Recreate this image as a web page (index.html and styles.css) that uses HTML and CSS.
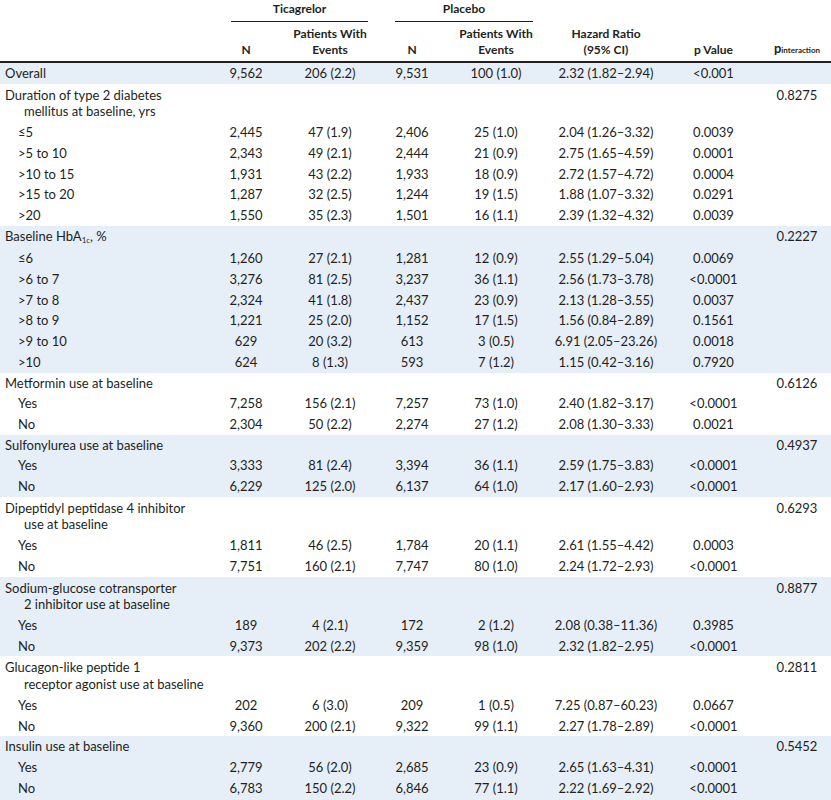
FILE: index.html
```html
<!DOCTYPE html>
<html lang="en">
<head>
<meta charset="utf-8">
<title>Subgroup analysis</title>
<link rel="stylesheet" href="styles.css">
</head>
<body>
<table class="tbl">
  <colgroup>
    <col class="c-label"><col class="c-n"><col class="c-ev"><col class="c-n2"><col class="c-ev2"><col class="c-hr"><col class="c-p"><col class="c-pi">
  </colgroup>
  <thead>
    <tr class="h1">
      <th></th>
      <th colspan="2"><div class="grp grp-t">Ticagrelor</div></th>
      <th colspan="2"><div class="grp grp-p">Placebo</div></th>
      <th></th><th></th><th></th>
    </tr>
    <tr class="h2">
      <th></th>
      <th>N</th>
      <th>Patients With<br>Events</th>
      <th>N</th>
      <th>Patients With<br>Events</th>
      <th>Hazard Ratio<br>(95% CI)</th>
      <th>p Value</th>
      <th><span class="pint">p<sub>interaction</sub></span></th>
    </tr>
  </thead>
  <tbody class="band">
    <tr><td class="lbl">Overall</td><td>9,562</td><td>206 (2.2)</td><td>9,531</td><td>100 (1.0)</td><td>2.32 (1.82–2.94)</td><td>&lt;0.001</td><td></td></tr>
  </tbody>
  <tbody>
    <tr class="gh"><td class="lbl">Duration of type 2 diabetes<span class="cont">mellitus at baseline, yrs</span></td><td></td><td></td><td></td><td></td><td></td><td></td><td>0.8275</td></tr>
    <tr><td class="sub">≤5</td><td>2,445</td><td>47 (1.9)</td><td>2,406</td><td>25 (1.0)</td><td>2.04 (1.26–3.32)</td><td>0.0039</td><td></td></tr>
    <tr><td class="sub">&gt;5 to 10</td><td>2,343</td><td>49 (2.1)</td><td>2,444</td><td>21 (0.9)</td><td>2.75 (1.65–4.59)</td><td>0.0001</td><td></td></tr>
    <tr><td class="sub">&gt;10 to 15</td><td>1,931</td><td>43 (2.2)</td><td>1,933</td><td>18 (0.9)</td><td>2.72 (1.57–4.72)</td><td>0.0004</td><td></td></tr>
    <tr><td class="sub">&gt;15 to 20</td><td>1,287</td><td>32 (2.5)</td><td>1,244</td><td>19 (1.5)</td><td>1.88 (1.07–3.32)</td><td>0.0291</td><td></td></tr>
    <tr><td class="sub">&gt;20</td><td>1,550</td><td>35 (2.3)</td><td>1,501</td><td>16 (1.1)</td><td>2.39 (1.32–4.32)</td><td>0.0039</td><td></td></tr>
  </tbody>
  <tbody class="band">
    <tr class="gh1"><td class="lbl">Baseline HbA<sub class="s">1c</sub>, %</td><td></td><td></td><td></td><td></td><td></td><td></td><td>0.2227</td></tr>
    <tr><td class="sub">≤6</td><td>1,260</td><td>27 (2.1)</td><td>1,281</td><td>12 (0.9)</td><td>2.55 (1.29–5.04)</td><td>0.0069</td><td></td></tr>
    <tr><td class="sub">&gt;6 to 7</td><td>3,276</td><td>81 (2.5)</td><td>3,237</td><td>36 (1.1)</td><td>2.56 (1.73–3.78)</td><td>&lt;0.0001</td><td></td></tr>
    <tr><td class="sub">&gt;7 to 8</td><td>2,324</td><td>41 (1.8)</td><td>2,437</td><td>23 (0.9)</td><td>2.13 (1.28–3.55)</td><td>0.0037</td><td></td></tr>
    <tr><td class="sub">&gt;8 to 9</td><td>1,221</td><td>25 (2.0)</td><td>1,152</td><td>17 (1.5)</td><td>1.56 (0.84–2.89)</td><td>0.1561</td><td></td></tr>
    <tr><td class="sub">&gt;9 to 10</td><td>629</td><td>20 (3.2)</td><td>613</td><td>3 (0.5)</td><td>6.91 (2.05–23.26)</td><td>0.0018</td><td></td></tr>
    <tr><td class="sub">&gt;10</td><td>624</td><td>8 (1.3)</td><td>593</td><td>7 (1.2)</td><td>1.15 (0.42–3.16)</td><td>0.7920</td><td></td></tr>
  </tbody>
  <tbody>
    <tr class="gh1"><td class="lbl">Metformin use at baseline</td><td></td><td></td><td></td><td></td><td></td><td></td><td>0.6126</td></tr>
    <tr><td class="sub">Yes</td><td>7,258</td><td>156 (2.1)</td><td>7,257</td><td>73 (1.0)</td><td>2.40 (1.82–3.17)</td><td>&lt;0.0001</td><td></td></tr>
    <tr><td class="sub">No</td><td>2,304</td><td>50 (2.2)</td><td>2,274</td><td>27 (1.2)</td><td>2.08 (1.30–3.33)</td><td>0.0021</td><td></td></tr>
  </tbody>
  <tbody class="band">
    <tr class="gh1"><td class="lbl">Sulfonylurea use at baseline</td><td></td><td></td><td></td><td></td><td></td><td></td><td>0.4937</td></tr>
    <tr><td class="sub">Yes</td><td>3,333</td><td>81 (2.4)</td><td>3,394</td><td>36 (1.1)</td><td>2.59 (1.75–3.83)</td><td>&lt;0.0001</td><td></td></tr>
    <tr><td class="sub">No</td><td>6,229</td><td>125 (2.0)</td><td>6,137</td><td>64 (1.0)</td><td>2.17 (1.60–2.93)</td><td>&lt;0.0001</td><td></td></tr>
  </tbody>
  <tbody>
    <tr class="gh"><td class="lbl">Dipeptidyl peptidase 4 inhibitor<span class="cont">use at baseline</span></td><td></td><td></td><td></td><td></td><td></td><td></td><td>0.6293</td></tr>
    <tr><td class="sub">Yes</td><td>1,811</td><td>46 (2.5)</td><td>1,784</td><td>20 (1.1)</td><td>2.61 (1.55–4.42)</td><td>0.0003</td><td></td></tr>
    <tr><td class="sub">No</td><td>7,751</td><td>160 (2.1)</td><td>7,747</td><td>80 (1.0)</td><td>2.24 (1.72–2.93)</td><td>&lt;0.0001</td><td></td></tr>
  </tbody>
  <tbody class="band">
    <tr class="gh"><td class="lbl">Sodium-glucose cotransporter<span class="cont">2 inhibitor use at baseline</span></td><td></td><td></td><td></td><td></td><td></td><td></td><td>0.8877</td></tr>
    <tr><td class="sub">Yes</td><td>189</td><td>4 (2.1)</td><td>172</td><td>2 (1.2)</td><td>2.08 (0.38–11.36)</td><td>0.3985</td><td></td></tr>
    <tr><td class="sub">No</td><td>9,373</td><td>202 (2.2)</td><td>9,359</td><td>98 (1.0)</td><td>2.32 (1.82–2.95)</td><td>&lt;0.0001</td><td></td></tr>
  </tbody>
  <tbody>
    <tr class="gh"><td class="lbl">Glucagon-like peptide 1<span class="cont">receptor agonist use at baseline</span></td><td></td><td></td><td></td><td></td><td></td><td></td><td>0.2811</td></tr>
    <tr><td class="sub">Yes</td><td>202</td><td>6 (3.0)</td><td>209</td><td>1 (0.5)</td><td>7.25 (0.87–60.23)</td><td>0.0667</td><td></td></tr>
    <tr><td class="sub">No</td><td>9,360</td><td>200 (2.1)</td><td>9,322</td><td>99 (1.1)</td><td>2.27 (1.78–2.89)</td><td>&lt;0.0001</td><td></td></tr>
  </tbody>
  <tbody class="band">
    <tr class="gh1"><td class="lbl">Insulin use at baseline</td><td></td><td></td><td></td><td></td><td></td><td></td><td>0.5452</td></tr>
    <tr><td class="sub">Yes</td><td>2,779</td><td>56 (2.0)</td><td>2,685</td><td>23 (0.9)</td><td>2.65 (1.63–4.31)</td><td>&lt;0.0001</td><td></td></tr>
    <tr><td class="sub">No</td><td>6,783</td><td>150 (2.2)</td><td>6,846</td><td>77 (1.1)</td><td>2.22 (1.69–2.92)</td><td>&lt;0.0001</td><td></td></tr>
    <tr class="pad"><td colspan="8"></td></tr>
  </tbody>
</table>
</body>
</html>
```

FILE: styles.css
```css
html, body {
  margin: 0;
  padding: 0;
  background: #ffffff;
}

body {
  font-family: Lato, "Open Sans", "Liberation Sans", sans-serif;
  font-size: 13px;
  color: #231f20;
}

.tbl {
  width: 831px;
  border-collapse: collapse;
  table-layout: fixed;
}

.c-label { width: 212px; }
.c-n { width: 68px; }
.c-ev { width: 100px; }
.c-n2 { width: 64px; }
.c-ev2 { width: 104px; }
.c-hr { width: 116px; }
.c-p { width: 99px; }
.c-pi { width: 68px; }

th {
  font-weight: 700;
  font-size: 12px;
  text-align: center;
  padding: 0;
  line-height: 16px;
}

.h1 th {
  padding-top: 1px;
  height: 25px;
  vertical-align: top;
}

.grp {
  border-bottom: 1.5px solid #231f20;
  padding-bottom: 4px;
}

.grp-t { margin: 0 12px 0 19px; }
.grp-p { margin: 0 15px 0 15px; }

.h2 th {
  vertical-align: bottom;
  padding-bottom: 3px;
  border-bottom: 2px solid #231f20;
}

.pint {
  font-size: 13px;
}

.pint sub {
  font-size: 8px;
  vertical-align: baseline;
  position: relative;
  top: 0;
}

td {
  text-align: center;
  padding: 2px 0;
  line-height: 16.7px;
  vertical-align: top;
  white-space: nowrap;
}

td.lbl {
  text-align: left;
  padding-left: 5px;
}

td.sub {
  text-align: left;
  padding-left: 18px;
}

.cont {
  display: block;
  padding-left: 19px;
}

sub.s {
  font-size: 8px;
  vertical-align: baseline;
  position: relative;
  top: 2px;
}

.band td {
  background: #e6eef7;
}

.gh td {
  padding-top: 3px;
  padding-bottom: 2px;
}

.pad td {
  height: 6px;
  padding: 0;
  line-height: 0;
}
```
